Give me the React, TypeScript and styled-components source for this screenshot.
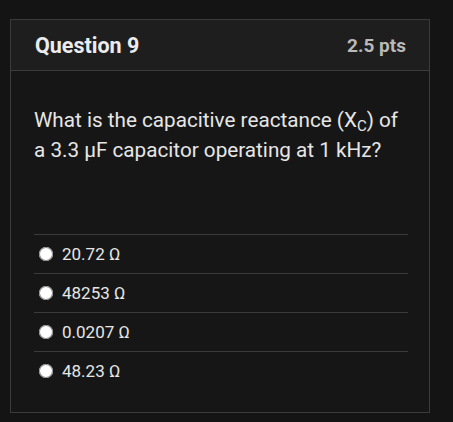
import styled, { createGlobalStyle } from "styled-components";

const GlobalStyle = createGlobalStyle`
  html, body {
    margin: 0;
    padding: 0;
    background: #141414;
    font-family: Roboto, "Liberation Sans", sans-serif;
  }
`;

const options = ["20.72 Ω", "48253 Ω", "0.0207 Ω", "48.23 Ω"];

const Page = styled.div`
  padding: 19px 0 0 10px;
`;

const Card = styled.div`
  width: 418px;
  border: 1px solid #3b3b3b;
  background: #161616;
`;

const Header = styled.div`
  height: 50px;
  display: flex;
  align-items: center;
  justify-content: space-between;
  padding: 0 23px 0 24px;
  background: #1e1e1e;
  border-bottom: 1px solid #3b3b3b;
`;

const Title = styled.h2`
  margin: 0;
  font-size: 21.5px;
  font-weight: 700;
  color: #ececec;
`;

const Points = styled.span`
  font-size: 19px;
  font-weight: 700;
  color: #b9b9b9;
`;

const Body = styled.div`
  padding: 34px 21px 22px 23px;
`;

const QuestionText = styled.p`
  margin: 0 0 69px;
  font-size: 20.7px;
  line-height: 30px;
  color: #e6e6e6;
`;

const Sub = styled.span`
  display: inline-block;
  font-size: 15px;
  line-height: 15px;
  transform: translateY(4px);
`;

const OptionList = styled.ul`
  list-style: none;
  margin: 0;
  padding: 0;
`;

const Option = styled.li`
  height: 38px;
  display: flex;
  align-items: center;
  gap: 9px;
  padding-left: 5px;
  border-top: 1px solid #3a3a3a;
  font-size: 17px;
  color: #e6e6e6;
`;

const Radio = styled.span`
  width: 14px;
  height: 14px;
  border-radius: 50%;
  background: #ffffff;
  box-shadow: 0 0 0 1px #8a8a8a inset;
  flex-shrink: 0;
`;

export default function App() {
  return (
    <Page>
      <GlobalStyle />
      <Card>
        <Header>
          <Title>Question 9</Title>
          <Points>2.5 pts</Points>
        </Header>
        <Body>
          <QuestionText>
            What is the capacitive reactance (X<Sub>C</Sub>) of a 3.3 μF
            capacitor operating at 1 kHz?
          </QuestionText>
          <OptionList>
            {options.map((o) => (
              <Option key={o}>
                <Radio />
                {o}
              </Option>
            ))}
          </OptionList>
        </Body>
      </Card>
    </Page>
  );
}
